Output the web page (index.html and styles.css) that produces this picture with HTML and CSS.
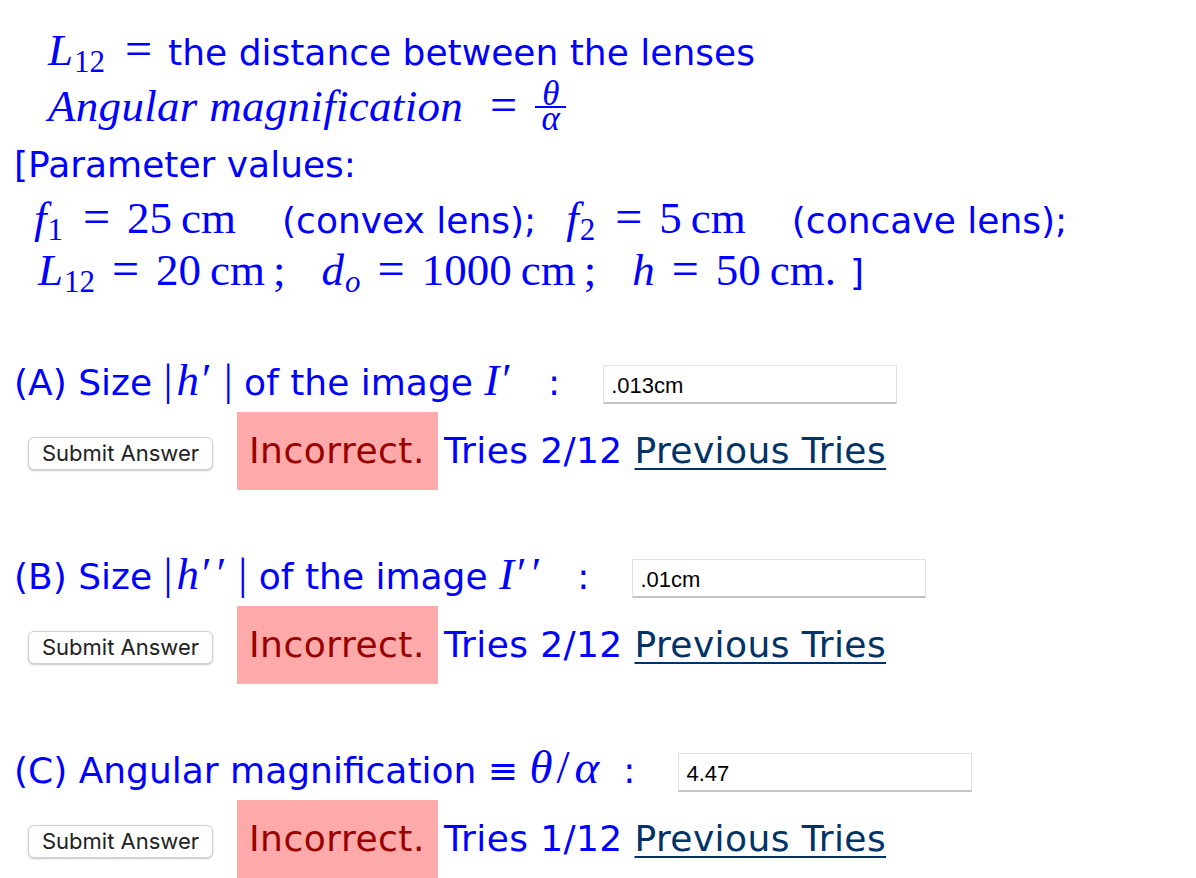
FILE: index.html
```html
<!DOCTYPE html>
<html>
<head>
<meta charset="utf-8">
<title>Lenses</title>
<link rel="stylesheet" href="styles.css">
</head>
<body>
<div class="problem">
  <div class="line l1"><span class="m"><i>L</i><span class="sub">12</span><span class="rel">=</span></span>the distance between the lenses</div>
  <div class="line l2"><span class="m"><i class="wide">Angular magnification</i><span class="rel r2">=</span><span class="frac"><span class="num"><i>θ</i></span><span class="den"><i>α</i></span></span></span></div>
  <div class="line">[Parameter values:</div>
  <div class="line l4"><span class="m"><i>f</i><span class="sub">1</span><span class="rel">=</span>25<span class="u">cm</span></span><span class="gq">(convex lens);</span><span class="m"><i>f</i><span class="sub">2</span><span class="rel">=</span>5<span class="u">cm</span></span><span class="gq">(concave lens);</span></div>
  <div class="line l5"><span class="m"><i>L</i><span class="sub">12</span><span class="rel">=</span>20<span class="u">cm</span><span class="semi">;</span><span class="gd"><i>d</i><span class="sub"><i>o</i></span></span><span class="rel">=</span>1000<span class="u">cm</span><span class="semi">;</span><span class="gd"><i>h</i></span><span class="rel">=</span>50<span class="u">cm</span>.</span><span class="br">]</span></div>
</div>

<div class="q qa">
  <div class="qlabel"><span class="qtext">(A) Size <span class="m">|<i class="hv">h</i><span class="pr">′</span>|</span> of the image <span class="m"><i>I</i><span class="pr">′</span></span><span class="colon">:</span></span><input class="ans" type="text" value=".013cm"></div>
  <div class="res"><button class="submit" type="button">Submit Answer</button><span class="bad">Incorrect.</span><span class="tries">Tries 2/12 <a href="#" class="prev">Previous Tries</a></span></div>
</div>

<div class="q">
  <div class="qlabel"><span class="qtext">(B) Size <span class="m">|<i class="hv">h</i><span class="pr">′′</span>|</span> of the image <span class="m"><i>I</i><span class="pr">′′</span></span><span class="colon">:</span></span><input class="ans" type="text" value=".01cm"></div>
  <div class="res"><button class="submit" type="button">Submit Answer</button><span class="bad">Incorrect.</span><span class="tries">Tries 2/12 <a href="#" class="prev">Previous Tries</a></span></div>
</div>

<div class="q">
  <div class="qlabel"><span class="qtext">(C) Angular magnification ≡ <span class="m ratio"><i>θ</i><span class="sl">/</span><i>α</i></span><span class="colon">:</span></span><input class="ans" type="text" value="4.47"></div>
  <div class="res"><button class="submit" type="button">Submit Answer</button><span class="bad">Incorrect.</span><span class="tries">Tries 1/12 <a href="#" class="prev">Previous Tries</a></span></div>
</div>
</body>
</html>
```

FILE: styles.css
```css
html, body {
  margin: 0;
  padding: 0;
  background: #ffffff;
}

body {
  font-family: "DejaVu Sans", Verdana, sans-serif;
  font-size: 36px;
  color: #0000ff;
  padding: 25px 0 0 14px;
}

.line {
  height: 56px;
  line-height: 56px;
  white-space: nowrap;
}

.l1 { padding-left: 34px; }
.l2 { padding-left: 34px; }
.l4 { padding-left: 20px; }
.l5 { padding-left: 24px; margin-top: -4px; }

.m {
  font-family: "Liberation Serif", "Times New Roman", serif;
  font-size: 45px;
  line-height: 0;
}

.m i { font-style: italic; }

.wide { letter-spacing: 0.3px; }

.sub {
  font-size: 31px;
  vertical-align: -7px;
  font-style: normal;
  margin-left: 1px;
}

.rel {
  font-size: 48px;
  margin: 0 17px;
}

.l4 .rel { margin: 0 17px 0 20px; }
.l1 .rel { margin: 0 16px 0 20px; }
.r2 { margin-left: 27px; margin-right: 18px; }

.u { margin-left: 9px; }

.semi { margin-left: 8px; }

.gq { margin-left: 46px; margin-right: 30px; }
.gd { margin-left: 36px; }
.br { margin-left: 14px; }

.frac {
  display: inline-flex;
  flex-direction: column;
  align-items: center;
  font-size: 35px;
  vertical-align: 16px;
}

.num {
  line-height: 24px;
  border-bottom: 2px solid #0000ff;
  padding: 0 7px;
}

.den { line-height: 21px; }

.hv { margin-left: 4px; }

.pr {
  font-size: 44px;
  vertical-align: 1px;
  margin-left: 3px;
  margin-right: 7px;
  letter-spacing: 5px;
}

.ratio { font-size: 47px; }
.sl { margin: 0 5px 0 4px; }

.q { margin-top: 69px; }
.qa { margin-top: 64px; }

.qlabel {
  display: flex;
  align-items: center;
  height: 39px;
}

.qtext {
  line-height: 39px;
  margin-top: -4px;
  white-space: nowrap;
}

.colon { margin-left: 24px; }

.ans {
  box-sizing: border-box;
  width: 294px;
  height: 39px;
  margin: 0 0 0 43px;
  padding: 4px 7px 0;
  border: 1px solid #e2e2e2;
  border-bottom: 2px solid #c4c4c4;
  font-family: "Liberation Sans", Arial, sans-serif;
  font-size: 22px;
  color: #000;
  background: #fff;
  outline: none;
}

.res {
  display: flex;
  align-items: center;
  height: 78px;
  margin-top: 8px;
  line-height: 78px;
  white-space: nowrap;
}

.submit {
  box-sizing: border-box;
  width: 185px;
  height: 33px;
  margin: 5px 0 0 14px;
  padding: 0;
  border: 1px solid #d0d0d0;
  border-radius: 6px;
  background: #ffffff;
  box-shadow: 0 1px 2px rgba(0, 0, 0, 0.22);
  font-family: Inter, "Liberation Sans", sans-serif;
  font-size: 22px;
  line-height: 31px;
  color: #222222;
}

.bad {
  margin-left: 24px;
  padding: 0 13px 0 12px;
  height: 78px;
  background: #ffaaaa;
  color: #990000;
  letter-spacing: 0.5px;
}

.tries {
  margin-left: 6px;
  letter-spacing: 0.4px;
}

.prev {
  color: #003366;
  text-decoration: underline;
  text-decoration-thickness: 2px;
  text-underline-offset: 5px;
}
```
